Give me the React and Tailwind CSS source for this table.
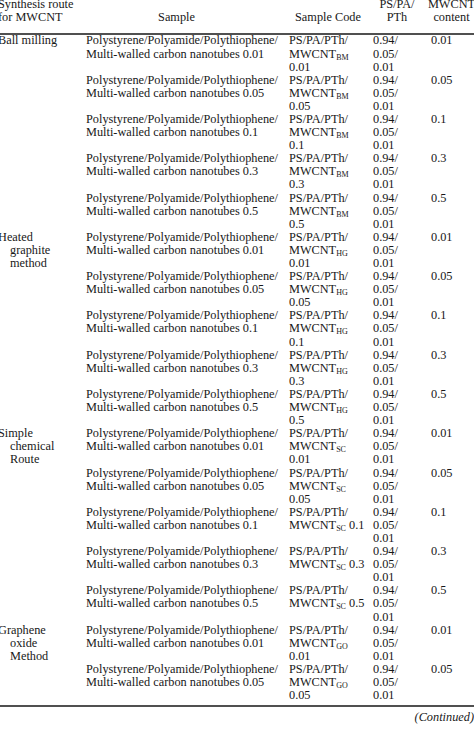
import React from 'react';

const GROUPS = [
  { label: ['Ball milling'], sub: 'BM', inline: false },
  { label: ['Heated', 'graphite', 'method'], sub: 'HG', inline: false },
  { label: ['Simple', 'chemical', 'Route'], sub: 'SC', inline: true },
  { label: ['Graphene', 'oxide', 'Method'], sub: 'GO', inline: false, only: ['0.01', '0.05'] },
];

const VALUES = ['0.01', '0.05', '0.1', '0.3', '0.5'];

function Code({ sub, value, inline }) {
  return (
    <div>
      <div>PS/PA/PTh/</div>
      <div>
        MWCNT<sub className="text-[8px]">{sub}</sub>
        {inline && ' ' + value}
      </div>
      <div>{inline ? '\u00a0' : value}</div>
    </div>
  );
}

function Row({ label, sub, value, inline }) {
  return (
    <div className="grid grid-cols-[88px_203px_84px_54px_1fr]">
      <div>
        {label &&
          label.map((l, i) => (
            <div key={i} className={i > 0 ? 'pl-[12px]' : ''}>
              {l}
            </div>
          ))}
      </div>
      <div>
        <div>Polystyrene/Polyamide/Polythiophene/</div>
        <div>Multi-walled carbon nanotubes {value}</div>
      </div>
      <Code sub={sub} value={value} inline={inline} />
      <div>
        <div>0.94/</div>
        <div>0.05/</div>
        <div>0.01</div>
      </div>
      <div className="pl-1">{value}</div>
    </div>
  );
}

export default function App() {
  return (
    <div
      className="w-[474px] h-[733px] overflow-hidden bg-white text-[12.3px] text-[#181818]"
      style={{ fontFamily: '"Liberation Serif", "Times New Roman", serif' }}
    >
      <div className="ml-[-2px] w-[478px]">
        {/* header */}
        <div className="grid grid-cols-[88px_203px_84px_54px_1fr] mt-[-2px] pb-[9px] leading-[13px] border-b-2 border-[#505050]">
          <div>
            <div>Synthesis route</div>
            <div>for MWCNT</div>
          </div>
          <div className="self-end text-center pr-[22px]">Sample</div>
          <div className="self-end text-center pr-[6px]">Sample Code</div>
          <div className="text-center pr-[6px]">
            <div>PS/PA/</div>
            <div>PTh</div>
          </div>
          <div className="text-center">
            <div>MWCNT</div>
            <div>content</div>
          </div>
        </div>

        {/* body */}
        <div className="leading-[13.1px] mt-[-0.6px] pb-[2.5px] border-b-2 border-[#505050]">
          {GROUPS.map((g) =>
            (g.only || VALUES).map((v, i) => (
              <Row
                key={g.sub + v}
                label={i === 0 ? g.label : null}
                sub={g.sub}
                value={v}
                inline={g.inline && i >= 2}
              />
            ))
          )}
        </div>

        <div className="text-right italic leading-[13px] pt-[4.5px] pr-[2px]">(Continued)</div>
      </div>
    </div>
  );
}
